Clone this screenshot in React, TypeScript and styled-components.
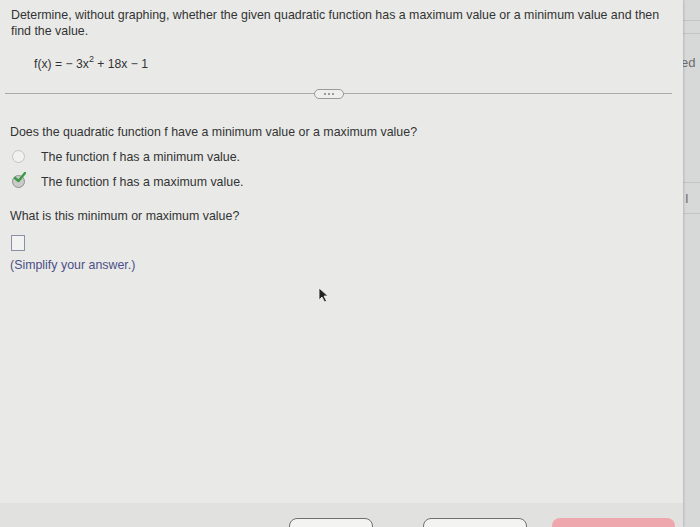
import styled, { createGlobalStyle } from 'styled-components';

const Global = createGlobalStyle`
  html, body { margin: 0; padding: 0; }
  body {
    width: 700px;
    height: 527px;
    overflow: hidden;
    background: #d6d7d6;
    font-family: "Liberation Sans", Arial, sans-serif;
  }
`;

const Page = styled.div`
  display: flex;
  width: 700px;
  height: 527px;
`;

const Main = styled.div`
  flex: 1;
  display: flex;
  flex-direction: column;
  background: #e9eae8;
  box-shadow: 1px 0 2px rgba(0, 0, 0, 0.15);
  position: relative;
`;

const Content = styled.div`
  flex: 1;
  color: #333;
  font-size: 12.4px;
`;

const Prompt = styled.div`
  padding: 7px 8px 0 11px;
  line-height: 16px;
`;

const Formula = styled.div`
  padding: 18px 0 0 34px;
  font-size: 12.2px;
  sup {
    font-size: 9px;
    vertical-align: 6px;
    line-height: 0;
  }
`;

const Divider = styled.div`
  margin: 22px 11px 0 5px;
  height: 1px;
  background: #a9abab;
  display: flex;
  justify-content: center;
  align-items: center;
`;

const Ellipsis = styled.div`
  width: 28px;
  height: 8px;
  border: 1px solid #9a9c9c;
  border-radius: 5px;
  background: #eeefed;
  display: flex;
  align-items: center;
  justify-content: center;
  gap: 2px;
  margin-left: -20px;
  span {
    width: 2px;
    height: 2px;
    border-radius: 50%;
    background: #7e8080;
  }
`;

const Question = styled.div<{ $top: number }>`
  padding: ${p => p.$top}px 0 0 10px;
`;

const Options = styled.div`
  display: flex;
  flex-direction: column;
  gap: 10px;
  padding: 10px 0 0 12px;
`;

const Option = styled.label`
  display: flex;
  align-items: center;
  gap: 16px;
  height: 15px;
`;

const Radio = styled.span<{ $checked?: boolean }>`
  position: relative;
  width: 11px;
  height: 11px;
  border-radius: 50%;
  border: 1px solid ${p => (p.$checked ? '#8e9190' : '#c3c5c4')};
  background: ${p => (p.$checked ? '#c9cbca' : '#f1f2f0')};
  flex: none;
`;

const Check = styled.svg`
  position: absolute;
  left: 1px;
  top: -4px;
`;

const AnswerBox = styled.div`
  margin: 12px 0 0 11px;
  width: 12px;
  height: 14px;
  border: 1.5px solid #8b90aa;
  background: #f2f3f1;
`;

const Hint = styled.div`
  padding: 7px 0 0 10px;
  color: #4d4f86;
`;

const Cursor = styled.svg`
  position: absolute;
  left: 318px;
  top: 287px;
`;

const Footer = styled.div`
  height: 24px;
  background: #e1e2e0;
  display: flex;
  align-items: flex-start;
  padding-top: 15px;
  box-sizing: border-box;
  overflow: hidden;
`;

const FootButton = styled.div<{ $ml: number; $w: number; $primary?: boolean }>`
  margin-left: ${p => p.$ml}px;
  width: ${p => p.$w}px;
  height: 20px;
  border-radius: 8px;
  border: ${p => (p.$primary ? 'none' : '1.5px solid #6f7170')};
  background: ${p => (p.$primary ? '#eea7ad' : '#f3f4f2')};
  box-sizing: border-box;
`;

const Side = styled.div`
  width: 17px;
  background: #d7d8d8;
  display: flex;
  flex-direction: column;
  color: #6b6d6e;
  font-size: 13px;
  overflow: hidden;
`;

const SideRow = styled.div<{ $h: number; $indent: number }>`
  height: ${p => p.$h}px;
  border-bottom: 1px solid #c3c4c4;
  display: flex;
  align-items: center;
  white-space: nowrap;
  text-indent: ${p => p.$indent}px;
`;

export default function App() {
  return (
    <Page>
      <Global />
      <Main>
        <Content>
          <Prompt>
            Determine, without graphing, whether the given quadratic function has a maximum value or a minimum value and then find the value.
          </Prompt>
          <Formula>
            f(x) = − 3x<sup>2</sup> + 18x − 1
          </Formula>
          <Divider>
            <Ellipsis>
              <span />
              <span />
              <span />
            </Ellipsis>
          </Divider>
          <Question $top={31}>Does the quadratic function f have a minimum value or a maximum value?</Question>
          <Options>
            <Option>
              <Radio />
              The function f has a minimum value.
            </Option>
            <Option>
              <Radio $checked>
                <Check width="12" height="11" viewBox="0 0 12 11">
                  <path d="M1 6 L4.5 9 L11 1" fill="none" stroke="#3b9a43" strokeWidth="2.4" strokeLinecap="round" strokeLinejoin="round" />
                </Check>
              </Radio>
              The function f has a maximum value.
            </Option>
          </Options>
          <Question $top={20}>What is this minimum or maximum value?</Question>
          <AnswerBox />
          <Hint>(Simplify your answer.)</Hint>
        </Content>
        <Cursor width="12" height="16" viewBox="0 0 12 16">
          <path d="M1 1 L1 13 L4 10 L6.5 15 L8.5 14 L6 9 L10 9 Z" fill="#222" stroke="#f4f4f4" strokeWidth="0.8" />
        </Cursor>
        <Footer>
          <FootButton $ml={289} $w={84} />
          <FootButton $ml={50} $w={104} />
          <FootButton $ml={25} $w={123} $primary />
        </Footer>
      </Main>
      <Side>
        <SideRow $h={20} $indent={0} />
        <SideRow $h={12} $indent={0} />
        <SideRow $h={148} $indent={-2}>
          <span style={{ marginTop: -92 }}>ed</span>
        </SideRow>
        <SideRow $h={30} $indent={2}>I</SideRow>
      </Side>
    </Page>
  );
}
